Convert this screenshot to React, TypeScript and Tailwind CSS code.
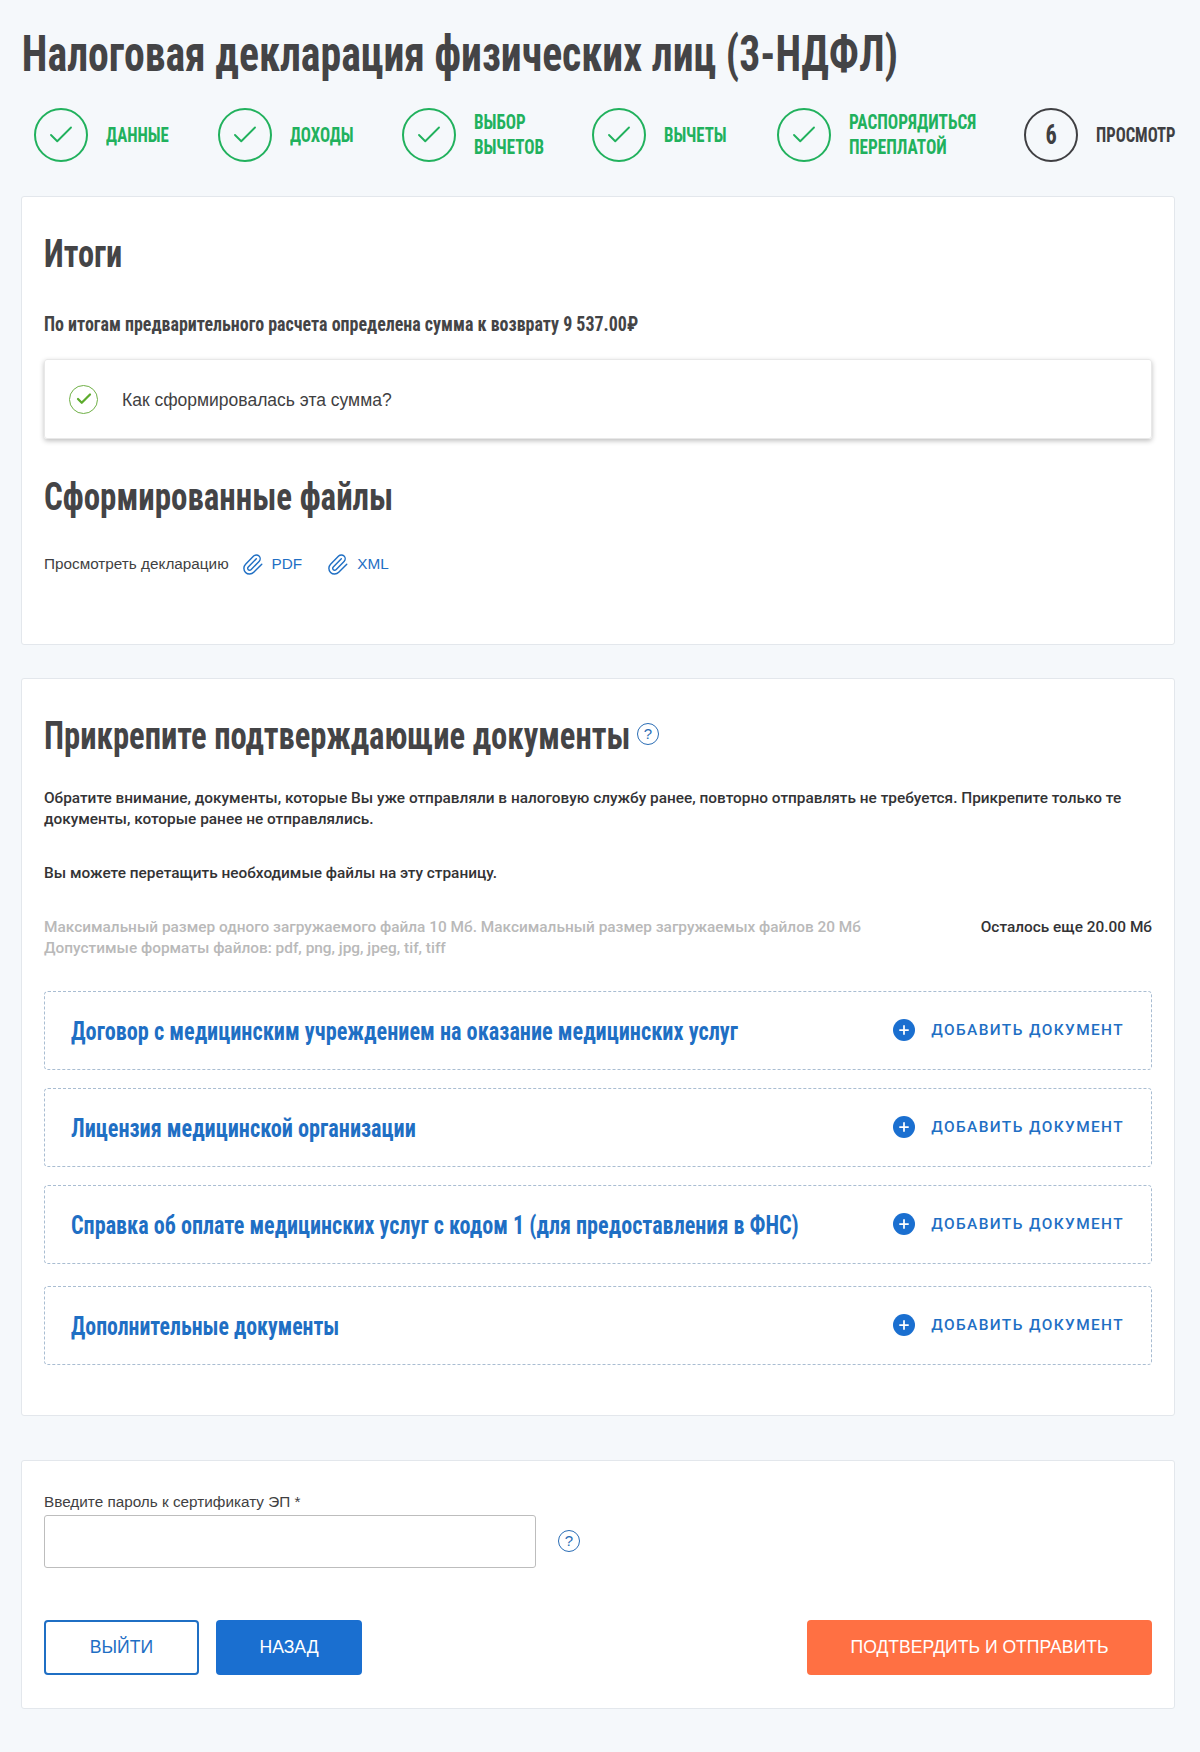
import { Check, Paperclip, Plus } from "lucide-react";

const din = "font-['Liberation_Sans_Narrow','Roboto_Condensed','Roboto',sans-serif] font-bold whitespace-nowrap origin-left";

function Step({ label, width, done = true, num }: { label: string[]; width: string; done?: boolean; num?: string }) {
  return (
    <div className="flex items-center gap-[18px]">
      <div
        className={`w-[54px] h-[54px] rounded-full border-2 flex items-center justify-center ${
          done ? "border-[#21b15d]" : "border-[#3f3f42]"
        }`}
      >
        {done ? (
          <Check className="w-[30px] h-[30px] text-[#21b15d]" strokeWidth={1.5} />
        ) : (
          <span className={`${din} inline-block !origin-center scale-x-[.8] text-[28px] text-[#3f3f42]`}>{num}</span>
        )}
      </div>
      <div className={`${width} ${din} text-[21px] leading-[25px] ${done ? "text-[#21b15d]" : "text-[#3f3f42]"}`}>
        {label.map((l) => (
          <div key={l}>{l}</div>
        ))}
      </div>
    </div>
  );
}

function Help({ className }: { className: string }) {
  return (
    <div
      className={`w-[22px] h-[22px] rounded-full border border-[#2a6db5] text-[#2a6db5] flex items-center justify-center text-[15px] font-['Liberation_Sans',sans-serif] ${className}`}
    >
      ?
    </div>
  );
}

function DocRow({ title, className = "", scale }: { title: string; className?: string; scale: string }) {
  return (
    <div
      className={`h-[79px] border border-dashed border-[#a9bdd2] rounded-[4px] pl-[26px] pr-[27px] flex items-center justify-between ${className}`}
    >
      <div className={`${din} ${scale} flex-1 min-w-0 mt-[2px] text-[26px] text-[#1f6fc4]`}>{title}</div>
      <div className="flex items-center gap-[16px]">
        <div className="w-[22px] h-[22px] rounded-full bg-[#1a6fd0] flex items-center justify-center">
          <Plus className="w-[14px] h-[14px] text-white" strokeWidth={3} />
        </div>
        <span className="font-['Roboto',sans-serif] font-medium text-[15.4px] tracking-[1.4px] text-[#1f6fc4] whitespace-nowrap">
          ДОБАВИТЬ ДОКУМЕНТ
        </span>
      </div>
    </div>
  );
}

export default function App() {
  return (
    <div className="min-h-[1752px] bg-[#f5f8fb] pl-[21px] pr-[25px] pt-[24px] pb-[44px] text-[#3f3f42]">
      <h1 className={`${din} scale-x-[.835] text-[50px] leading-[60px] text-[#444446] pl-[1px]`}>
        Налоговая декларация физических лиц (3-НДФЛ)
      </h1>

      <div className="flex justify-between pl-[13px] mt-[24px]">
        <Step width="w-[63px] scale-x-[.8]" label={["ДАННЫЕ"]} />
        <Step width="w-[63px] scale-x-[.8]" label={["ДОХОДЫ"]} />
        <Step width="w-[68px] scale-x-[.81]" label={["ВЫБОР", "ВЫЧЕТОВ"]} />
        <Step width="w-[64px] scale-x-[.8]" label={["ВЫЧЕТЫ"]} />
        <Step width="w-[126px] scale-x-[.82]" label={["РАСПОРЯДИТЬСЯ", "ПЕРЕПЛАТОЙ"]} />
        <Step width="w-[79px] scale-x-[.79]" label={["ПРОСМОТР"]} done={false} num="6" />
      </div>

      <section className="mt-[34px] h-[449px] bg-white border border-[#e3e7ec] rounded-[3px] px-[22px] pt-[34px]">
        <h2 className={`${din} scale-x-[.854] text-[38px] leading-[46px] text-[#444446]`}>Итоги</h2>
        <p className={`${din} scale-x-[.897] text-[20px] leading-[26px] mt-[34px] text-[#444446]`}>
          По итогам предварительного расчета определена сумма к возврату 9 537.00₽
        </p>
        <div className="mt-[22px] h-[80px] rounded-[3px] border border-[#e8e8e8] shadow-[0_2px_5px_rgba(0,0,0,0.25)] flex items-center pl-[24px] gap-[24px]">
          <div className="w-[29px] h-[29px] rounded-full border border-[#6fb046] flex items-center justify-center">
            <Check className="w-[18px] h-[18px] text-[#5cab2c]" strokeWidth={3} />
          </div>
          <span className="font-['Liberation_Sans',sans-serif] text-[17.5px] text-[#3f3f42] mt-[2px]">
            Как сформировалась эта сумма?
          </span>
        </div>
        <h2 className={`${din} scale-x-[.867] text-[38px] leading-[46px] mt-[35px] text-[#444446]`}>Сформированные файлы</h2>
        <div className="flex items-center mt-[33px] font-['Liberation_Sans',sans-serif] text-[15.3px]">
          <span>Просмотреть декларацию</span>
          <Paperclip className="ml-[12px] w-[23px] h-[23px] text-[#1f6fc4]" strokeWidth={1.5} />
          <span className="ml-[8px] text-[#1f6fc4]">PDF</span>
          <Paperclip className="ml-[24px] w-[23px] h-[23px] text-[#1f6fc4]" strokeWidth={1.5} />
          <span className="ml-[8px] text-[#1f6fc4]">XML</span>
        </div>
      </section>

      <section className="mt-[33px] bg-white border border-[#e3e7ec] rounded-[3px] px-[22px] pt-[34px] pb-[50px]">
        <div className="flex items-center gap-[7px]">
          <h2 className={`${din} w-[586px] scale-x-[.858] text-[38px] leading-[46px] text-[#444446]`}>
            Прикрепите подтверждающие документы
          </h2>
          <Help className="-mt-[4px]" />
        </div>
        <div className="font-['Roboto',sans-serif] font-medium text-[15.4px] leading-[21px] text-[#333335]">
          <p className="mt-[29px]">
            Обратите внимание, документы, которые Вы уже отправляли в налоговую службу ранее, повторно отправлять не
            требуется. Прикрепите только те документы, которые ранее не отправлялись.
          </p>
          <p className="mt-[33px]">Вы можете перетащить необходимые файлы на эту страницу.</p>
          <div className="mt-[33px] flex justify-between">
            <p className="text-[#b9b9b9]">
              Максимальный размер одного загружаемого файла 10 Мб. Максимальный размер загружаемых файлов 20 Мб
              <br />
              Допустимые форматы файлов: pdf, png, jpg, jpeg, tif, tiff
            </p>
            <span>Осталось еще 20.00 Мб</span>
          </div>
        </div>
        <div className="mt-[32px]">
          <DocRow scale="scale-x-[.855]" title="Договор с медицинским учреждением на оказание медицинских услуг" />
          <DocRow scale="scale-x-[.855]" className="mt-[18px]" title="Лицензия медицинской организации" />
          <DocRow
            scale="scale-x-[.851]"
            className="mt-[18px]"
            title="Справка об оплате медицинских услуг с кодом 1 (для предоставления в ФНС)"
          />
          <DocRow scale="scale-x-[.838]" className="mt-[22px]" title="Дополнительные документы" />
        </div>
      </section>

      <section className="mt-[44px] bg-white border border-[#e3e7ec] rounded-[3px] px-[22px] pt-[32px] pb-[33px] font-['Liberation_Sans',sans-serif]">
        <label className="block text-[15.3px] leading-[18px] text-[#3f3f42]">Введите пароль к сертификату ЭП *</label>
        <div className="flex items-center mt-[4px]">
          <div className="w-[492px] h-[53px] bg-white border border-[#bdbdbd] rounded-[3px]" />
          <Help className="ml-[22px] -mt-[1px]" />
        </div>
        <div className="flex mt-[52px] text-[17.6px]">
          <div className="w-[155px] h-[55px] border-2 border-[#1f6fc4] rounded-[4px] text-[#1f6fc4] flex items-center justify-center">
            ВЫЙТИ
          </div>
          <div className="ml-[17px] w-[146px] h-[55px] bg-[#1a6fd0] rounded-[4px] text-white flex items-center justify-center">
            НАЗАД
          </div>
          <div className="ml-auto w-[345px] h-[55px] bg-[#ff7043] rounded-[4px] text-white flex items-center justify-center">
            ПОДТВЕРДИТЬ И ОТПРАВИТЬ
          </div>
        </div>
      </section>
    </div>
  );
}
